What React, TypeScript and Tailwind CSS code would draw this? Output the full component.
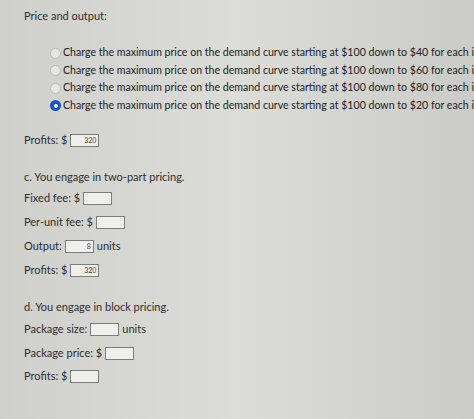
const font = { fontFamily: 'Lato, "Liberation Sans", Arial, sans-serif' };

function Box({ value, w = "w-[29px]" }: { value?: string; w?: string }) {
  return (
    <span
      className={`inline-flex items-center justify-end ${w} h-[13px] border border-[#7d7d7b] bg-[#efefec] px-[2px] text-[7px] leading-none text-[#444] mx-[3px]`}
    >
      {value}
    </span>
  );
}

function Radio({ checked }: { checked?: boolean }) {
  if (checked) {
    return (
      <span className="inline-flex items-center justify-center w-[11px] h-[11px] rounded-full bg-[#1656c9] mr-[2px] shrink-0">
        <span className="w-[4px] h-[4px] rounded-full bg-white" />
      </span>
    );
  }
  return (
    <span className="inline-block w-[11px] h-[11px] rounded-full border border-[#b9b9b6] bg-[#e6e6e3] mr-[2px] shrink-0" />
  );
}

function Row({ children, className = "" }: { children: React.ReactNode; className?: string }) {
  return <div className={`flex items-center h-[14px] ${className}`}>{children}</div>;
}

export default function App() {
  const options = [
    { to: "$40", checked: false },
    { to: "$60", checked: false },
    { to: "$80", checked: false },
    { to: "$20", checked: true },
  ];
  return (
    <div
      className="w-[474px] h-[419px] overflow-hidden bg-gradient-to-r from-[#cfcfcc] via-[#dcdcd9] to-[#cbcbc8] text-[11px] text-[#2e2e2e] pl-[24px] pt-[9px]"
      style={font}
    >
      <Row>Price and output:</Row>

      <div className="flex flex-col mt-[23px] ml-[26px] gap-[3.5px] overflow-hidden">
        {options.map((o, i) => (
          <div key={i} className="flex items-center h-[14px] whitespace-nowrap">
            <Radio checked={o.checked} />
            <span className="text-[10.6px] text-[#222]">
              Charge the maximum price on the demand curve starting at $100 down to {o.to} for each item
            </span>
          </div>
        ))}
      </div>

      <Row className="mt-[21px]">
        Profits: $<Box value="320" />
      </Row>

      <Row className="mt-[23px]">c. You engage in two-part pricing.</Row>
      <Row className="mt-[7px]">
        Fixed fee: $<Box />
      </Row>
      <Row className="mt-[10px]">
        Per-unit fee: $<Box />
      </Row>
      <Row className="mt-[10px]">
        Output:<Box value="8" />units
      </Row>
      <Row className="mt-[10px]">
        Profits: $<Box value="320" />
      </Row>

      <Row className="mt-[23px]">d. You engage in block pricing.</Row>
      <Row className="mt-[8px]">
        Package size:<Box />units
      </Row>
      <Row className="mt-[10px]">
        Package price: $<Box />
      </Row>
      <Row className="mt-[9px]">
        Profits: $<Box />
      </Row>
    </div>
  );
}
